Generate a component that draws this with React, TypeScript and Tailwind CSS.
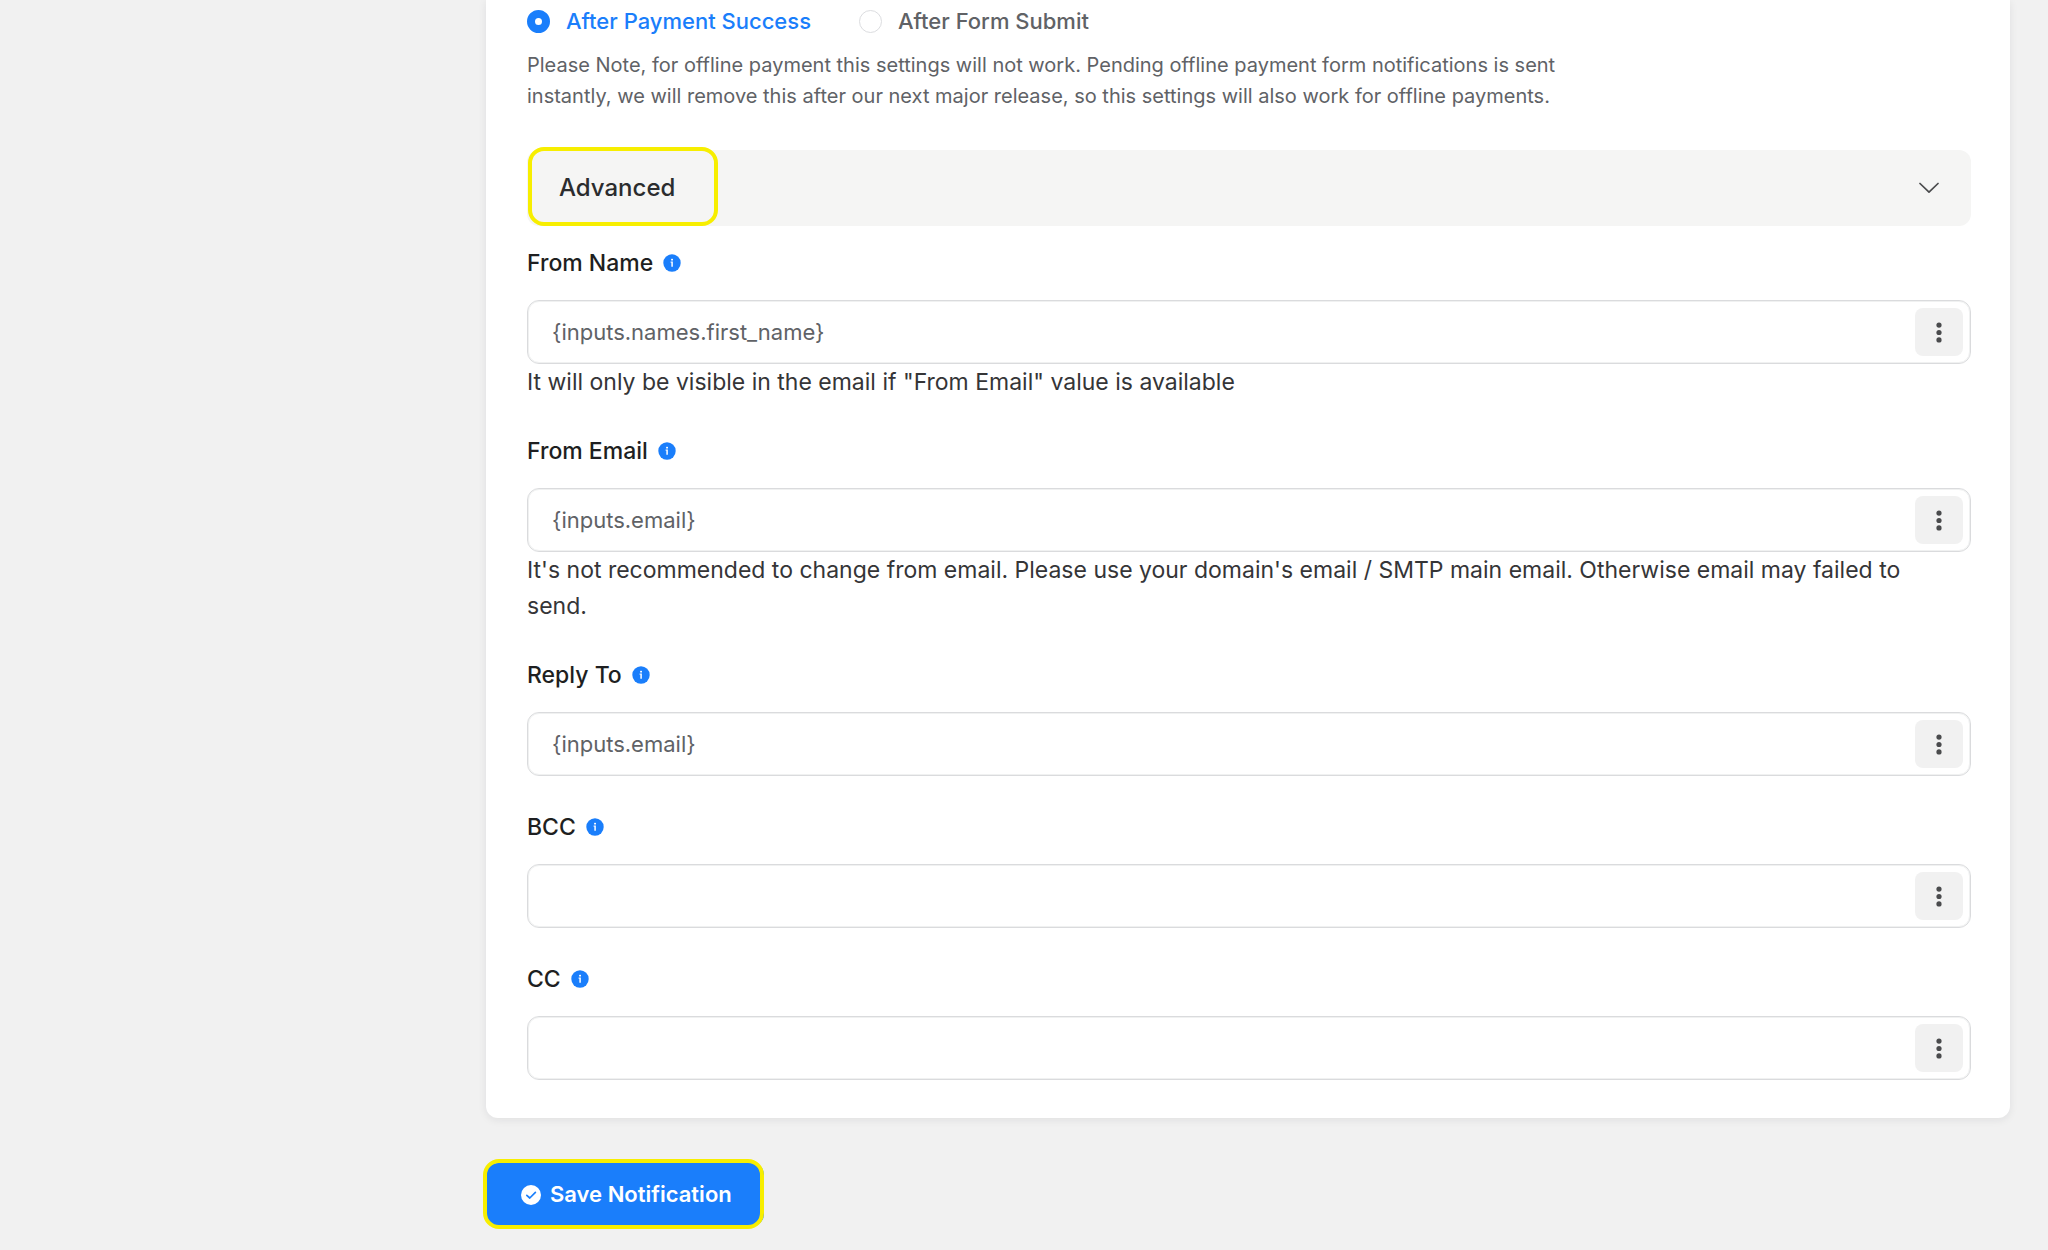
import { useState } from "react";

type FieldProps = {
  id: string;
  label: string;
  initial?: string;
  help?: string;
};

function InfoIcon() {
  return (
    <svg viewBox="0 0 18 18" className="size-[18px]" aria-hidden="true">
      <circle cx="9" cy="9" r="8.7" fill="#1a7efb" />
      <rect x="8.1" y="4.7" width="1.9" height="1.9" rx="0.6" fill="#fff" />
      <path d="M7.6 7.6h2.3v5.2H8.3V8.7h-.7z" fill="#fff" opacity=".92" />
    </svg>
  );
}

function DotsIcon() {
  return (
    <svg viewBox="0 0 6 21" className="h-[21px] w-[6px]" fill="#4a4b4d" aria-hidden="true">
      <circle cx="3" cy="3.1" r="2.6" />
      <circle cx="3" cy="10.5" r="2.6" />
      <circle cx="3" cy="17.9" r="2.6" />
    </svg>
  );
}

function CheckBadgeIcon() {
  return (
    <svg viewBox="0 0 20 20" className="size-5" aria-hidden="true">
      <circle cx="10" cy="10" r="10" fill="#fff" />
      <path
        d="M5.8 10.3l3 2.7 5.6-5.6"
        fill="none"
        stroke="#1a7efb"
        strokeWidth="1.7"
        strokeLinecap="round"
        strokeLinejoin="round"
      />
    </svg>
  );
}

function Field({ id, label, initial = "", help }: FieldProps) {
  const [value, setValue] = useState(initial);
  return (
    <div>
      <div className="flex h-9 items-center gap-[10px]">
        <label htmlFor={id} className="text-[23px] leading-9 font-medium text-[#1e1f21]">
          {label}
        </label>
        <InfoIcon />
      </div>
      <div className="mt-[19px] flex h-16 items-center rounded-xl border border-[#dadbdd] bg-white pr-[7px] pl-6 outline outline-[#dadbdd]/40 -outline-offset-2">
        <input
          id={id}
          type="text"
          value={value}
          onChange={(e) => setValue(e.target.value)}
          className="h-full min-w-0 flex-1 bg-transparent text-[22px] text-[#606266] outline-none"
        />
        <button
          type="button"
          aria-label={`${label} shortcodes`}
          className="flex size-12 shrink-0 items-center justify-center rounded-lg bg-[#f1f1f1]"
        >
          <DotsIcon />
        </button>
      </div>
      {help && <p className="pr-8 text-[23px] leading-9 text-[#353537]">{help}</p>}
    </div>
  );
}

const radioClass =
  "size-[23px] shrink-0 appearance-none rounded-full border border-[#dcdde0] bg-white checked:border-8 checked:border-[#1a7efb]";

export default function App() {
  const [timing, setTiming] = useState("payment");
  return (
    <div className="min-h-screen bg-[#f1f1f1] pr-[38px] pb-5 pl-[486px] font-['Inter',sans-serif]">
      <main>
        <section className="rounded-b-xl bg-white pt-1 pr-[39px] pb-[38px] pl-[41px] shadow-[0_2px_8px_rgba(30,31,33,0.08)]">
          <div className="flex h-[34px] items-center gap-12 text-[22px] font-medium">
            <label className="flex items-center gap-4 text-[#1a7efb]">
              <input
                type="radio"
                name="timing"
                checked={timing === "payment"}
                onChange={() => setTiming("payment")}
                className={radioClass}
              />
              After Payment Success
            </label>
            <label className="flex items-center gap-4 text-[#606266]">
              <input
                type="radio"
                name="timing"
                checked={timing === "submit"}
                onChange={() => setTiming("submit")}
                className={radioClass}
              />
              After Form Submit
            </label>
          </div>
          <p className="mt-3 max-w-[1070px] text-[20px] leading-[31px] text-[#606266]">
            Please Note, for offline payment this settings will not work. Pending offline payment
            form notifications is sent instantly, we will remove this after our next major release,
            so this settings will also work for offline payments.
          </p>

          <button
            type="button"
            aria-expanded="true"
            className="relative mt-[38px] flex h-[76px] w-full items-center justify-between rounded-xl bg-[#f5f5f4] px-8"
          >
            <span className="text-[24px] font-medium text-[#2b2c2e]">Advanced</span>
            <svg viewBox="0 0 20 12" className="h-3 w-5" fill="none" aria-hidden="true">
              <path
                d="M1 1.5l9 8.7 9-8.7"
                stroke="#4a4b4d"
                strokeWidth="1.7"
                strokeLinecap="round"
                strokeLinejoin="round"
              />
            </svg>
            <span className="absolute -top-[3px] left-px h-[79px] w-[190px] rounded-2xl border-4 border-[#f7ee00]" />
          </button>

          <div className="mt-[19px] flex flex-col gap-[33px]">
            <Field
              id="from-name"
              label="From Name"
              initial="{inputs.names.first_name}"
              help={'It will only be visible in the email if "From Email" value is available'}
            />
            <Field
              id="from-email"
              label="From Email"
              initial="{inputs.email}"
              help="It's not recommended to change from email. Please use your domain's email / SMTP main email. Otherwise email may failed to send."
            />
            <Field id="reply-to" label="Reply To" initial="{inputs.email}" />
            <Field id="bcc" label="BCC" />
            <Field id="cc" label="CC" />
          </div>
        </section>

        <button
          type="button"
          className="relative mt-[45px] flex h-[63px] items-center gap-[9px] rounded-xl bg-[#1a7efb] pr-8 pl-[35px] text-[22px] font-semibold text-white"
        >
          <CheckBadgeIcon />
          Save Notification
          <span className="absolute -top-1 right-0 -bottom-[3px] -left-[3px] rounded-2xl border-4 border-[#f7ee00]" />
        </button>
      </main>
    </div>
  );
}
